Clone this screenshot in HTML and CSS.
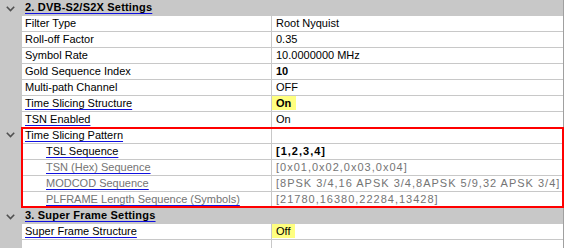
FILE: index.html
```html
<!DOCTYPE html>
<html>
<head>
<meta charset="utf-8">
<link rel="stylesheet" href="styles.css">
</head>
<body>
<div class="grid">
  <div class="cat">
    <div class="gut"><svg class="chev" width="9" height="6" viewBox="0 0 9 6"><polyline points="0.8,0.8 4.5,4.5 8.2,0.8"/></svg></div>
    <div class="cat-name"><span class="lnk">2. DVB-S2/S2X Settings</span></div>
  </div>
  <div class="row"><div class="gut"></div><div class="name">Filter Type</div><div class="val">Root Nyquist</div></div>
  <div class="row"><div class="gut"></div><div class="name">Roll-off Factor</div><div class="val">0.35</div></div>
  <div class="row"><div class="gut"></div><div class="name">Symbol Rate</div><div class="val">10.0000000 MHz</div></div>
  <div class="row"><div class="gut"></div><div class="name">Gold Sequence Index</div><div class="val b">10</div></div>
  <div class="row"><div class="gut"></div><div class="name">Multi-path Channel</div><div class="val">OFF</div></div>
  <div class="row"><div class="gut"></div><div class="name"><span class="lnk">Time Slicing Structure</span></div><div class="val"><span class="hl b">On</span></div></div>
  <div class="row"><div class="gut"></div><div class="name"><span class="lnk">TSN Enabled</span></div><div class="val">On</div></div>
  <div class="group">
    <div class="row"><div class="gut"><svg class="chev sub" width="9" height="6" viewBox="0 0 9 6"><polyline points="0.8,0.8 4.5,4.5 8.2,0.8"/></svg></div><div class="name"><span class="lnk">Time Slicing Pattern</span></div><div class="val"></div></div>
    <div class="row"><div class="gut"></div><div class="name ind"><span class="lnk">TSL Sequence</span></div><div class="val b wide">[1,2,3,4]</div></div>
    <div class="row"><div class="gut"></div><div class="name ind"><span class="lnk dim">TSN (Hex) Sequence</span></div><div class="val dim wide">[0x01,0x02,0x03,0x04]</div></div>
    <div class="row"><div class="gut"></div><div class="name ind"><span class="lnk dim">MODCOD Sequence</span></div><div class="val dim wide">[8PSK 3/4,16 APSK 3/4,8APSK 5/9,32 APSK 3/4]</div></div>
    <div class="row"><div class="gut"></div><div class="name ind"><span class="lnk dim">PLFRAME Length Sequence (Symbols)</span></div><div class="val dim wide">[21780,16380,22284,13428]</div></div>
  </div>
  <div class="cat">
    <div class="gut"><svg class="chev" width="9" height="6" viewBox="0 0 9 6"><polyline points="0.8,0.8 4.5,4.5 8.2,0.8"/></svg></div>
    <div class="cat-name"><span class="lnk">3. Super Frame Settings</span></div>
  </div>
  <div class="row"><div class="gut"></div><div class="name"><span class="lnk">Super Frame Structure</span></div><div class="val"><span class="hl">Off</span></div></div>
  <div class="row last"><div class="gut"></div><div class="name"></div><div class="val"></div></div>
</div>
</body>
</html>
```

FILE: styles.css
```css
html, body {
  margin: 0;
  padding: 0;
  background: #ffffff;
}
body {
  font-family: "Liberation Sans", Arial, sans-serif;
  font-size: 11px;
  color: #000;
  width: 564px;
  height: 248px;
  overflow: hidden;
}
.grid {
  width: 563px;
  border-right: 1px solid #a0a0a0;
  height: 248px;
  display: flex;
  flex-direction: column;
}
.cat {
  display: flex;
  height: 16px;
  background: #c8c8c8;
  border-bottom: 1px solid #c8c8c8;
  line-height: 15px;
  font-weight: bold;
}
.cat .gut {
  width: 22px;
  flex: none;
}
.cat-name {
  padding-left: 3px;
  letter-spacing: 0.2px;
}
.chev {
  display: block;
  margin: 6px 0 0 6px;
}
.chev polyline {
  fill: none;
  stroke: #505050;
  stroke-width: 1.6;
}
.chev.sub {
  margin-top: 4px;
}
.row {
  display: flex;
  height: 16px;
  line-height: 15px;
}
.gut {
  width: 22px;
  flex: none;
  background: #c8c8c8;
}
.name {
  width: 246px;
  flex: none;
  padding-left: 3px;
  border-right: 1px solid #c8c8c8;
  border-bottom: 1px solid #c8c8c8;
  white-space: nowrap;
  height: 15px;
}
.name.ind {
  width: 225px;
  padding-left: 24px;
}
.val {
  flex: 1;
  padding-left: 4px;
  border-bottom: 1px solid #c8c8c8;
  white-space: nowrap;
  height: 15px;
}
.row.last .name,
.row.last .val {
  border-bottom: none;
}
.row.last {
  flex: 1;
}
.lnk {
  text-decoration: underline;
  text-decoration-color: #1010e0;
  text-underline-offset: 2px;
}
.dim {
  color: #747474;
}
.b {
  font-weight: bold;
}
.wide {
  letter-spacing: 1px;
}
.hl {
  display: inline-block;
  background: #ffff80;
  margin-left: -4px;
  padding: 0 5px 0 4px;
  height: 14px;
  line-height: 14px;
}
.group {
  position: relative;
}
.group::after {
  content: "";
  position: absolute;
  top: -1px;
  left: 21px;
  right: -1px;
  bottom: 0;
  border: 2px solid #ff0000;
  pointer-events: none;
}
```
